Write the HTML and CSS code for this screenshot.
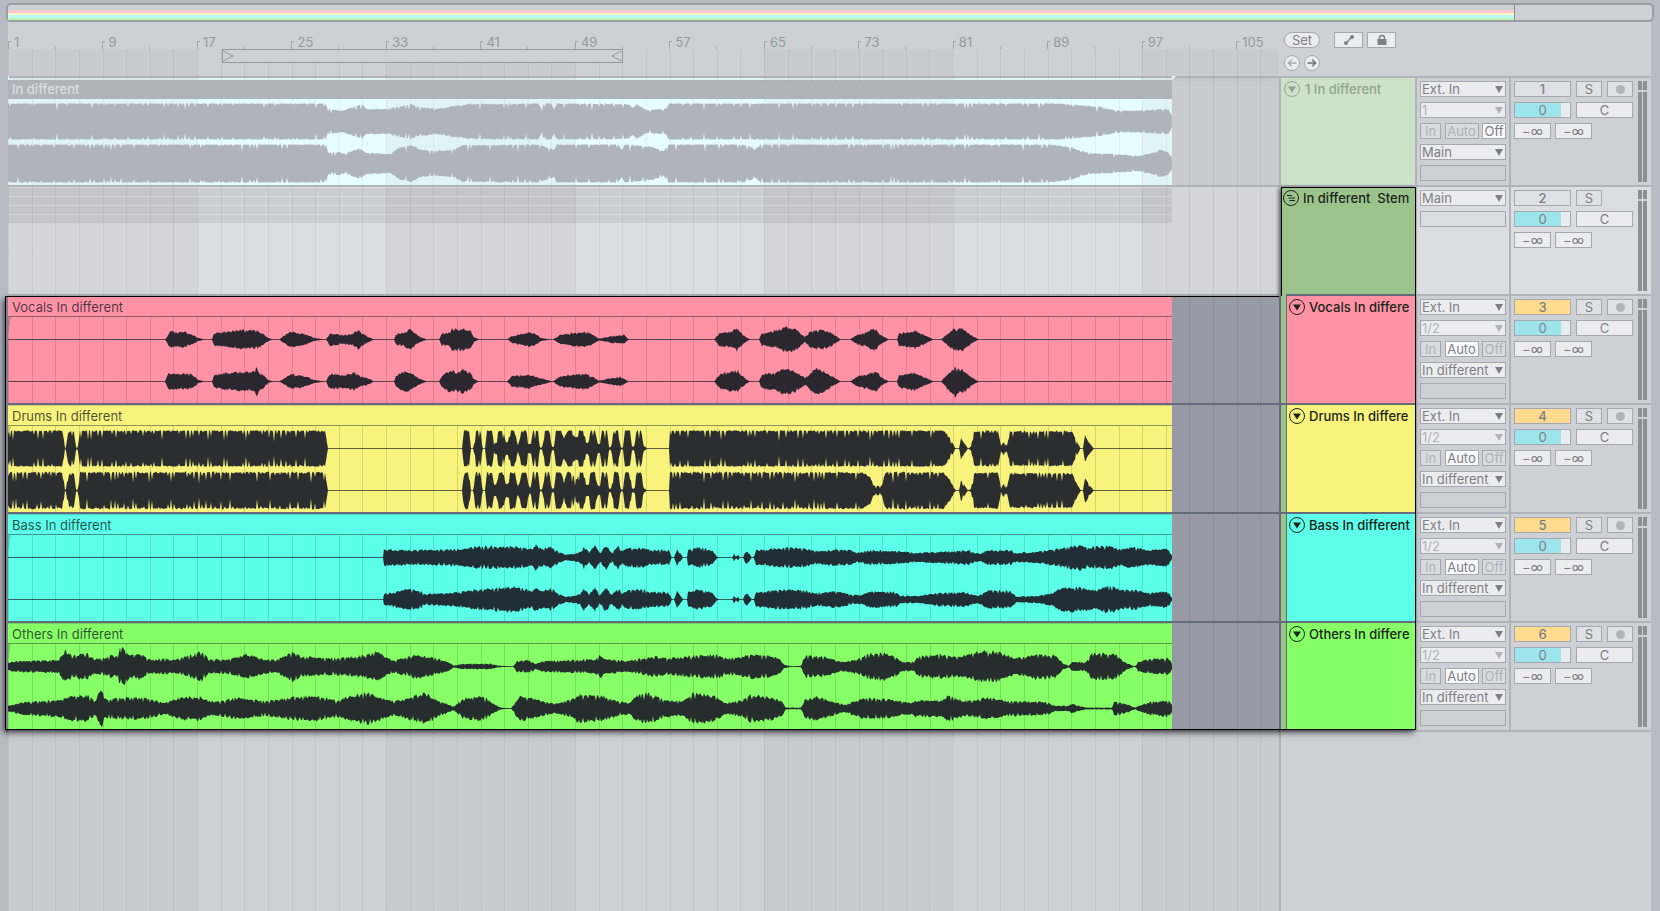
FILE: index.html
```html
<!DOCTYPE html>
<html lang="en">
<head>
  <meta charset="UTF-8" />
  <meta name="viewport" content="width=device-width, initial-scale=1.0"/>
  <title>In different - Arrangement</title>
  <link rel="stylesheet" href="styles.css">
</head>

<body>
  <!-- Overview -->
  <div class="overview"><div class="overview-content"></div></div>

  <div class="arranger">
    <!-- Ruler -->
    <div class="row ruler-row">
      <div class="ruler">
        <div class="ruler-numbers">
          <span>1</span><span>9</span><span>17</span><span>25</span><span>33</span><span>41</span><span>49</span>
          <span>57</span><span>65</span><span>73</span><span>81</span><span>89</span><span>97</span><span>105</span>
        </div>
        <div class="scrub grid-lines"></div>
        <div class="loop">
          <svg width="11" height="12" viewBox="0 0 11 12"><path d="M0.5 1 L10 6 L0.5 11" /></svg>
          <svg width="11" height="12" viewBox="0 0 11 12"><path d="M10.5 1 L1 6 L10.5 11" /></svg>
        </div>
        <i class="flag flag-start"></i>
        <i class="flag flag-end"></i>
      </div>
      <div class="ruler-tools">
        <div class="tool-line">
          <button class="pill">Set</button>
          <button class="tool tool-first" aria-label="Automation mode">
            <svg width="12" height="12" viewBox="0 0 12 12"><path d="M3 9.5 L9 2.5" stroke="#7d7f84" stroke-width="1.4"/><circle cx="3" cy="9" r="2" fill="#7d7f84"/><circle cx="9" cy="3" r="2" fill="#7d7f84"/></svg>
          </button>
          <button class="tool" aria-label="Lock envelopes">
            <svg width="12" height="12" viewBox="0 0 12 12"><path d="M3.5 6 V4 a2.5 2.5 0 0 1 5 0 V6" fill="none" stroke="#7d7f84" stroke-width="1.4"/><rect x="1.5" y="5" width="9" height="6" fill="#7d7f84"/></svg>
          </button>
        </div>
        <div class="tool-line">
          <button class="round off" aria-label="Previous locator">
            <svg width="10" height="10" viewBox="0 0 10 10"><path d="M9.5 5 H1.5 M4.8 1.8 L1.5 5 L4.8 8.2"/></svg>
          </button>
          <button class="round" aria-label="Next locator">
            <svg width="10" height="10" viewBox="0 0 10 10"><path d="M0.5 5 H8.5 M5.2 1.8 L8.5 5 L5.2 8.2"/></svg>
          </button>
        </div>
      </div>
    </div>

    <!-- Track 1 -->
    <div class="row track muted">
      <div class="lane grid-lines">
        <div class="clip">
          <div class="clip-title">In different</div>
          <svg class="wave" data-wave="mix" viewBox="0 0 1164 86" preserveAspectRatio="none"></svg>
        </div>
      </div>
      <div class="track-header">
        <button class="fold" aria-label="Fold track"><svg width="16" height="16" viewBox="0 0 16 16"><circle cx="8" cy="8" r="7.5"/><path d="M4 5.5 H12 L8 11.5 Z"/></svg></button>
        <span>1 In different</span>
      </div>
      <div class="io">
        <select aria-label="Input type"><option>Ext. In</option></select>
        <select class="dim" aria-label="Input channel"><option>1</option></select>
        <div class="monitor"><button>In</button><button>Auto</button><button class="on">Off</button></div>
        <select aria-label="Output type"><option>Main</option></select>
        <div class="blank"></div>
      </div>
      <div class="mixer">
        <div class="controls">
          <div class="line"><button class="num">1</button><button class="small">S</button><button class="small" aria-label="Arm"><i class="dot"></i></button></div>
          <div class="line"><input class="volume" type="text" value="0" aria-label="Volume"><input class="pan" type="text" value="C" aria-label="Pan"></div>
          <div class="line sends"><input type="text" value="−∞" aria-label="Send A"><input type="text" value="−∞" aria-label="Send B"></div>
        </div>
        <div class="meter"><i></i><i></i></div>
      </div>
    </div>

    <!-- Track 2, group -->
    <div class="row track group">
      <div class="lane grid-lines">
        <div class="mini-clips"><i></i><i></i><i></i><i></i></div>
      </div>
      <div class="track-header">
        <button class="fold" aria-label="Fold group"><svg width="16" height="16" viewBox="0 0 16 16"><circle cx="8" cy="8" r="7.5"/><path class="bars" d="M4 5.5 H9 M5.5 8 H12 M6.5 10.5 H12"/></svg></button>
        <span>In different  Stem</span>
      </div>
      <div class="io">
        <select aria-label="Output type"><option>Main</option></select>
        <div class="blank"></div>
      </div>
      <div class="mixer">
        <div class="controls">
          <div class="line"><button class="num">2</button><button class="small">S</button></div>
          <div class="line"><input class="volume" type="text" value="0" aria-label="Volume"><input class="pan" type="text" value="C" aria-label="Pan"></div>
          <div class="line sends"><input type="text" value="−∞" aria-label="Send A"><input type="text" value="−∞" aria-label="Send B"></div>
        </div>
        <div class="meter"><i></i><i></i></div>
      </div>
    </div>

    <!-- Stems -->
    <div class="stems">
      <div class="row track stem vocals">
        <div class="lane grid-lines">
          <div class="clip">
            <div class="clip-title">Vocals In different</div>
            <svg class="wave" data-wave="vocals" viewBox="0 0 1164 86" preserveAspectRatio="none"></svg>
          </div>
        </div>
        <div class="track-header">
          <button class="fold" aria-label="Fold track"><svg width="16" height="16" viewBox="0 0 16 16"><circle cx="8" cy="8" r="7.5"/><path d="M4 5.5 H12 L8 11.5 Z"/></svg></button>
          <span>Vocals In differe</span>
        </div>
        <div class="io">
          <select aria-label="Input type"><option>Ext. In</option></select>
          <select class="dim" aria-label="Input channel"><option>1/2</option></select>
          <div class="monitor"><button>In</button><button class="on">Auto</button><button>Off</button></div>
          <select aria-label="Output type"><option>In different</option></select>
          <div class="blank"></div>
        </div>
        <div class="mixer">
          <div class="controls">
            <div class="line"><button class="num">3</button><button class="small">S</button><button class="small" aria-label="Arm"><i class="dot"></i></button></div>
            <div class="line"><input class="volume" type="text" value="0" aria-label="Volume"><input class="pan" type="text" value="C" aria-label="Pan"></div>
            <div class="line sends"><input type="text" value="−∞" aria-label="Send A"><input type="text" value="−∞" aria-label="Send B"></div>
          </div>
          <div class="meter"><i></i><i></i></div>
        </div>
      </div>

      <div class="row track stem drums">
        <div class="lane grid-lines">
          <div class="clip">
            <div class="clip-title">Drums In different</div>
            <svg class="wave" data-wave="drums" viewBox="0 0 1164 86" preserveAspectRatio="none"></svg>
          </div>
        </div>
        <div class="track-header">
          <button class="fold" aria-label="Fold track"><svg width="16" height="16" viewBox="0 0 16 16"><circle cx="8" cy="8" r="7.5"/><path d="M4 5.5 H12 L8 11.5 Z"/></svg></button>
          <span>Drums In differe</span>
        </div>
        <div class="io">
          <select aria-label="Input type"><option>Ext. In</option></select>
          <select class="dim" aria-label="Input channel"><option>1/2</option></select>
          <div class="monitor"><button>In</button><button class="on">Auto</button><button>Off</button></div>
          <select aria-label="Output type"><option>In different</option></select>
          <div class="blank"></div>
        </div>
        <div class="mixer">
          <div class="controls">
            <div class="line"><button class="num">4</button><button class="small">S</button><button class="small" aria-label="Arm"><i class="dot"></i></button></div>
            <div class="line"><input class="volume" type="text" value="0" aria-label="Volume"><input class="pan" type="text" value="C" aria-label="Pan"></div>
            <div class="line sends"><input type="text" value="−∞" aria-label="Send A"><input type="text" value="−∞" aria-label="Send B"></div>
          </div>
          <div class="meter"><i></i><i></i></div>
        </div>
      </div>

      <div class="row track stem bass">
        <div class="lane grid-lines">
          <div class="clip">
            <div class="clip-title">Bass In different</div>
            <svg class="wave" data-wave="bass" viewBox="0 0 1164 86" preserveAspectRatio="none"></svg>
          </div>
        </div>
        <div class="track-header">
          <button class="fold" aria-label="Fold track"><svg width="16" height="16" viewBox="0 0 16 16"><circle cx="8" cy="8" r="7.5"/><path d="M4 5.5 H12 L8 11.5 Z"/></svg></button>
          <span>Bass In different</span>
        </div>
        <div class="io">
          <select aria-label="Input type"><option>Ext. In</option></select>
          <select class="dim" aria-label="Input channel"><option>1/2</option></select>
          <div class="monitor"><button>In</button><button class="on">Auto</button><button>Off</button></div>
          <select aria-label="Output type"><option>In different</option></select>
          <div class="blank"></div>
        </div>
        <div class="mixer">
          <div class="controls">
            <div class="line"><button class="num">5</button><button class="small">S</button><button class="small" aria-label="Arm"><i class="dot"></i></button></div>
            <div class="line"><input class="volume" type="text" value="0" aria-label="Volume"><input class="pan" type="text" value="C" aria-label="Pan"></div>
            <div class="line sends"><input type="text" value="−∞" aria-label="Send A"><input type="text" value="−∞" aria-label="Send B"></div>
          </div>
          <div class="meter"><i></i><i></i></div>
        </div>
      </div>

      <div class="row track stem others">
        <div class="lane grid-lines">
          <div class="clip">
            <div class="clip-title">Others In different</div>
            <svg class="wave" data-wave="others" viewBox="0 0 1164 86" preserveAspectRatio="none"></svg>
          </div>
        </div>
        <div class="track-header">
          <button class="fold" aria-label="Fold track"><svg width="16" height="16" viewBox="0 0 16 16"><circle cx="8" cy="8" r="7.5"/><path d="M4 5.5 H12 L8 11.5 Z"/></svg></button>
          <span>Others In differe</span>
        </div>
        <div class="io">
          <select aria-label="Input type"><option>Ext. In</option></select>
          <select class="dim" aria-label="Input channel"><option>1/2</option></select>
          <div class="monitor"><button>In</button><button class="on">Auto</button><button>Off</button></div>
          <select aria-label="Output type"><option>In different</option></select>
          <div class="blank"></div>
        </div>
        <div class="mixer">
          <div class="controls">
            <div class="line"><button class="num">6</button><button class="small">S</button><button class="small" aria-label="Arm"><i class="dot"></i></button></div>
            <div class="line"><input class="volume" type="text" value="0" aria-label="Volume"><input class="pan" type="text" value="C" aria-label="Pan"></div>
            <div class="line sends"><input type="text" value="−∞" aria-label="Send A"><input type="text" value="−∞" aria-label="Send B"></div>
          </div>
          <div class="meter"><i></i><i></i></div>
        </div>
      </div>
    </div>

    <!-- Drop area -->
    <div class="row drop-area">
      <div class="lane grid-lines"></div>
      <div class="drop-side"></div>
    </div>
  </div>

  <script src="waves.js"></script>
</body>
</html>
```

FILE: styles.css
```css
:root {
  --frame: #b9bac4;
  --surface: #cdd1d6;
  --line: #b0b3ba;
  --selected-line: #656b7a;
  --control-bg: #ececef;
  --control-border: #a6a8af;
  --text: #7d7f85;
  --text-dim: #b0b2b8;
  --band: rgba(182, 174, 182, 0.18);
  --grid: rgba(0, 0, 0, 0.06);
}

* {
  box-sizing: border-box;
}

body {
  margin: 0;
  padding: 3px 6px 0;
  min-height: 100vh;
  display: flex;
  flex-direction: column;
  background: var(--frame);
  color: var(--text);
  font-family: Inter, sans-serif;
  font-size: 13px;
  line-height: 16px;
}

button,
input,
select {
  margin: 0;
  padding: 0;
  height: 16px;
  min-width: 0;
  border: 1px solid var(--control-border);
  border-radius: 0;
  background: var(--control-bg);
  color: var(--text);
  font: inherit;
  line-height: 14px;
}

/* Overview */
.overview {
  height: 19px;
  padding: 5px 0 1px;
  border: 2px solid #9b9da3;
  border-radius: 5px;
  background: var(--surface);
}

.overview-content {
  position: relative;
  width: 91.6%;
  height: 10px;
  background: linear-gradient(#f9c8d0 0 3px, #fbfac4 3px 5px, #b9fbf3 5px 8px, #bdf9ae 8px);
}

.overview-content::after {
  content: "";
  position: absolute;
  right: -1px;
  top: -5px;
  bottom: -1px;
  width: 1px;
  background: #8f9197;
}

/* Arranger */
.arranger {
  flex: 1;
  margin: 0 3px 0 2px;
  display: flex;
  flex-direction: column;
  background: var(--surface);
}

.row {
  display: grid;
  grid-template-columns: 1fr 136px 94px 142px;
}

.grid-lines {
  background-image:
    repeating-linear-gradient(90deg, var(--grid) 0 1px, transparent 1px 1.859%),
    repeating-linear-gradient(90deg, var(--band) 0 14.87%, transparent 14.87% 29.74%);
}

/* Ruler */
.ruler-row {
  height: 56px;
  border-bottom: 2px solid var(--line);
}

.ruler {
  position: relative;
  display: flex;
  flex-direction: column;
}

.ruler-numbers {
  display: flex;
  height: 27px;
  padding-top: 12px;
  overflow: hidden;
  color: #96989d;
}

.ruler-numbers span {
  flex: 0 0 7.435%;
  height: 16px;
  padding-left: 6px;
  background:
    linear-gradient(#a3a5aa, #a3a5aa) 0 7px / 1px 8px no-repeat,
    linear-gradient(#a3a5aa, #a3a5aa) 0 7px / 3px 1px no-repeat,
    linear-gradient(#a3a5aa, #a3a5aa) 50% 13px / 1px 2px no-repeat;
}

.scrub {
  flex: 1;
}

.loop {
  position: absolute;
  left: 16.8%;
  top: 27px;
  width: 31.55%;
  height: 14px;
  display: flex;
  justify-content: space-between;
  border: 1px solid #96989d;
  background: var(--surface);
}

.loop path {
  fill: none;
  stroke: #96989d;
}

.flag {
  position: absolute;
  bottom: 1px;
  width: 4px;
  height: 4px;
  background: #e6fdff;
  clip-path: polygon(0 0, 100% 0, 0 100%);
}

.flag-start {
  left: 0;
  width: 1px;
  clip-path: none;
}

.flag-end {
  left: 91.58%;
}

.ruler-tools {
  grid-column: 2 / -1;
  display: flex;
  flex-direction: column;
  gap: 7px;
  padding: 10px 5px;
}

.tool-line {
  display: flex;
  gap: 4px;
}

.pill {
  width: 36px;
  border-radius: 8px;
}

.tool {
  width: 29px;
}

.tool-first {
  margin-left: 10px;
}

.tool,
.round {
  display: flex;
  align-items: center;
  justify-content: center;
}

.round {
  width: 16px;
  border-radius: 50%;
}

.round path {
  fill: none;
  stroke: #6f7176;
  stroke-width: 1.6;
}

.round.off path {
  stroke: #a9abb1;
}

/* Lanes and clips */
.track > div {
  min-height: 109px;
  border-bottom: 2px solid var(--line);
}

.clip {
  width: 91.58%;
}

.clip-title {
  height: 21px;
  padding: 2px 4px 0;
  border-bottom: 1px solid rgba(40, 50, 60, 0.5);
  border-top: 1px solid rgba(40, 50, 60, 0.2);
  color: rgba(20, 20, 30, 0.75);
}

.wave {
  display: block;
  width: 100%;
  height: 86px;
  background-image:
    linear-gradient(100deg, rgba(0, 0, 0, 0.12) 0 3px, transparent 3px),
    repeating-linear-gradient(90deg, rgba(0, 0, 0, 0.13) 0 1px, transparent 1px 2.03%);
}

.wave path {
  fill: #2b2d2f;
}

.vocals .wave path {
  fill: #2b2731;
}

.bass .wave path {
  fill: #222e36;
}

.others .wave path {
  fill: #252e2c;
}

.wave line {
  stroke: rgba(30, 30, 40, 0.7);
  stroke-width: 1;
}

.muted .clip {
  background: #e6fdff;
}

.muted .clip-title {
  border-top: 2px solid #e2f5f8;
  border-bottom: 0;
  height: 21px;
  padding-top: 1px;
  background: #b0b3ba;
  color: #dcdee2;
  font-weight: 500;
}

.muted .wave {
  background-image:
    repeating-linear-gradient(90deg, rgba(0, 0, 0, 0.05) 0 1px, transparent 1px 2.03%),
    repeating-linear-gradient(90deg, #e0f3f7 0 16.24%, transparent 16.24% 32.48%);
}

.muted .wave path {
  fill: #afb3bb;
}

.muted .wave line {
  stroke: none;
}

.mini-clips {
  width: 91.58%;
  padding-top: 1px;
  display: flex;
  flex-direction: column;
  gap: 1px;
}

.mini-clips i {
  height: 8px;
  background: rgba(0, 0, 0, 0.07);
}

/* Track headers */
.track-header {
  display: flex;
  align-items: flex-start;
  gap: 5px;
  padding: 3px 0 0 3px;
  border-left: 2px solid var(--line);
  overflow: hidden;
  white-space: pre;
  font-weight: 500;
}

.fold {
  flex: none;
  width: 16px;
  border: 0;
  background: none;
}

.fold svg {
  display: block;
}

.fold circle,
.fold .bars {
  fill: none;
  stroke: currentColor;
}

.fold path {
  fill: currentColor;
}

.muted .track-header,
.muted .fold {
  color: #93a390;
}

.muted .track-header {
  background: #cee2c8;
}

.group .track-header,
.stem .track-header,
.group .fold,
.stem .fold {
  color: #1b241b;
}

.group .lane,
.group .io,
.group .mixer {
  background-color: #dbdde1;
}

.group .track-header {
  position: relative;
  z-index: 2;
  gap: 4px;
  margin-left: 2px;
  padding-left: 2px;
  border: 0;
  overflow: visible;
  background: #9bc48d;
  box-shadow: inset 1px 1px 0 #000, 1px 0 0 #000, -2px 1px 4px rgba(0, 0, 0, 0.6);
}

.group .track-header::after {
  content: "";
  position: absolute;
  left: 5px;
  right: 0;
  bottom: 0;
  height: 2px;
  background: var(--selected-line);
}

/* Stems */
.stems {
  position: relative;
}

.stems::after {
  content: "";
  position: absolute;
  top: 0;
  left: -3px;
  right: 235px;
  bottom: 2px;
  border: 1px solid #000;
  box-shadow: -2px 3px 6px rgba(0, 0, 0, 0.6);
  pointer-events: none;
}

.stem .lane {
  background-color: #9096a1;
  border-bottom-color: var(--selected-line);
  box-shadow: -2px 0 0 #7d808c;
}

.stem .track-header {
  padding-left: 8px;
  gap: 4px;
  border-left-color: var(--selected-line);
  border-bottom-color: var(--selected-line);
}

.stem.vocals .track-header {
  position: relative;
  z-index: 3;
}

.stem.others > div {
  border-bottom-color: var(--line);
}

.vocals .clip {
  background: #ff93a5;
}

.drums .clip {
  background: #f8f37c;
}

.bass .clip {
  background: #5cffe8;
}

.others .clip {
  background: #87ff67;
}

.vocals .track-header {
  background: linear-gradient(90deg, #9bc48d 5px, #66706a 5px 6px, #ff93a5 6px);
}

.drums .track-header {
  background: linear-gradient(90deg, #9bc48d 5px, #66706a 5px 6px, #f8f37c 6px);
}

.bass .track-header {
  background: linear-gradient(90deg, #9bc48d 5px, #66706a 5px 6px, #5cffe8 6px);
}

.others .track-header {
  background: linear-gradient(90deg, #9bc48d 5px, #66706a 5px 6px, #87ff67 6px);
}

/* In / out section */
.io {
  display: flex;
  flex-direction: column;
  gap: 5px;
  padding: 3px 3px 4px;
  border-left: 2px solid var(--line);
}

.io select {
  appearance: none;
  width: 100%;
  padding: 0 0 0 1px;
  background: var(--control-bg) url("data:image/svg+xml,%3Csvg xmlns='http://www.w3.org/2000/svg' width='8' height='7'%3E%3Cpath d='M0 0h8L4 7z' fill='%237d7f85'/%3E%3C/svg%3E") right 2px center no-repeat;
}

.io .dim {
  color: var(--text-dim);
  background-image: url("data:image/svg+xml,%3Csvg xmlns='http://www.w3.org/2000/svg' width='8' height='7'%3E%3Cpath d='M0 0h8L4 7z' fill='%23b0b2b8'/%3E%3C/svg%3E");
}

.blank {
  height: 16px;
  border: 1px solid var(--control-border);
}

.monitor {
  display: grid;
  grid-template-columns: 21px 34px 24px;
  justify-content: space-between;
}

.monitor button {
  background: #d9dbdf;
  color: var(--text-dim);
}

.monitor .on {
  background: #f8f8fa;
  color: var(--text);
}

/* Mixer section */
.mixer {
  display: flex;
  justify-content: space-between;
  padding: 3px 4px 3px 3px;
  border-left: 2px solid var(--line);
}

.controls {
  display: flex;
  flex-direction: column;
  gap: 5px;
}

.line {
  display: flex;
  gap: 5px;
}

.line input {
  text-align: center;
}

.num,
.volume,
.pan {
  width: 57px;
}

.num {
  background: #dfe1e5;
  font-weight: 500;
}

.stem .num {
  background: #ffdb90;
}

.small {
  width: 26px;
  background: #dfe1e5;
}

.dot {
  display: block;
  width: 9px;
  height: 9px;
  margin: 0 auto;
  border-radius: 50%;
  background: var(--line);
}

.volume {
  background: linear-gradient(90deg, #9de5ed 84%, var(--control-bg) 84%);
}

.sends {
  gap: 4px;
}

.sends input {
  width: 37px;
}

.meter {
  display: flex;
  gap: 1px;
}

.meter i {
  width: 4px;
  background: linear-gradient(#8d8f94 9px, #cdd1d6 9px 11px, #8d8f94 11px);
}

/* Drop area */
.drop-area {
  flex: 1;
}

.drop-side {
  grid-column: 2 / -1;
  border-left: 2px solid var(--line);
}
```

FILE: waves.js
```js
// Envelopes are flat lists of x, amplitude pairs in clip pixels
const WIDTH = 1164;

const vocals = [
  157,0, 162,9, 169,8, 176,9, 185,5, 190,2, 197,0, 204,0, 206,7, 221,9, 235,11, 249,10, 254,7, 260,2, 265,0,
  271,0, 278,6, 283,9, 292,7, 299,5, 306,2, 316,0, 318,0, 322,7, 335,5, 344,6, 350,11, 355,7, 360,3, 366,0,
  386,0, 388,6, 397,8, 402,12, 406,8, 412,3, 419,0, 431,0, 434,7, 440,7, 444,12, 456,12, 463,9, 466,3, 471,0,
  499,0, 504,4, 521,8, 528,6, 533,2, 542,0, 545,0, 552,5, 569,8, 581,8, 591,1, 605,4, 616,5, 621,0,
  706,0, 712,8, 722,8, 729,13, 734,6, 742,0, 751,0, 754,7, 769,10, 779,14, 789,11, 797,3, 803,10, 816,11, 824,7, 833,0,
  842,0, 850,6, 859,8, 866,13, 873,5, 881,0, 889,0, 891,7, 907,10, 916,5, 926,0, 933,0, 940,7, 946,12, 956,12, 963,5, 971,0
];
const vocalsRight = [
  157,0, 160,9, 169,9, 180,9, 185,7, 190,2, 197,0, 204,0, 206,7, 221,10, 247,11, 249,17, 251,10, 256,7, 260,2, 265,0,
  271,0, 283,8, 292,7, 299,5, 306,2, 316,0, 318,0, 322,9, 335,7, 346,10, 352,6, 360,4, 366,0,
  386,0, 388,6, 397,12, 403,9, 412,3, 419,0, 431,0, 434,7, 443,13, 448,10, 454,14, 463,9, 466,3, 471,0,
  499,0, 504,6, 521,8, 528,5, 542,1, 545,0, 552,6, 577,9, 585,5, 591,1, 605,4, 613,5, 621,0,
  706,0, 712,8, 722,11, 730,12, 734,6, 742,0, 751,0, 754,8, 769,10, 775,15, 785,13, 797,4, 803,10, 808,15, 818,10, 833,0,
  842,0, 850,6, 859,8, 868,12, 873,5, 881,0, 889,0, 891,7, 907,10, 916,5, 926,0, 933,0, 940,9, 947,16, 956,12, 963,5, 971,0
];

const drumsStart = [0,15, 2,19, 54,19, 56,9, 57,0, 58,2, 60,15, 63,19, 66,17, 68,2, 69,0, 70,3, 72,19, 317,19, 320,0, 453,0];
const drumsEnd = [
  639,0, 661,0, 662,19, 935,19, 940,14, 948,0, 951,0, 953,11, 960,0, 963,2, 966,18, 990,19, 993,3, 996,7, 999,3, 1002,18,
  1064,18, 1070,5, 1073,0, 1075,0, 1077,14, 1081,6, 1086,0
];
// broken beat: one hit every 11.5px, with the level it falls back to
const hits = [];
[0, 0, 6, 7, 7, 5, 1, 2, 13, 12, 6, 5, 2, 1, 2, 2].forEach((low, i) => {
  const x = 454 + i * 11.5;
  hits.push(x, i ? hits[hits.length - 1] : 0, x + 2, 19, x + 7, 19, x + 9, low, x + 11, low);
});
const drums = drumsStart.concat(hits, drumsEnd);
const drumsRight = drumsStart.concat(hits, [
  639,0, 661,0, 662,19, 855,19, 862,14, 866,5, 874,5, 877,19
], drumsEnd.slice(6));

const bassMid = [543,12, 551,6, 558,3, 566,4, 572,6, 576,12, 581,6, 587,13, 592,5, 598,13, 604,5, 610,13, 614,7, 619,10, 633,11,
  643,8, 661,8, 664,0, 666,0, 669,9, 674,2, 675,0, 679,0, 680,8, 691,11, 704,8, 709,1, 712,0, 724,0, 726,4, 728,1, 730,3,
  732,0, 735,0, 738,8, 742,3, 744,0, 746,1, 748,8, 778,11, 797,10, 809,7, 829,9];
const bass = [375,0, 376,9, 400,8, 451,9, 470,12, 509,12, 524,9, 528,14, 535,9].concat(bassMid, [
  843,8, 849,5, 861,8, 888,7, 908,5, 948,7, 960,8, 967,5, 973,4, 979,8, 1003,8, 1007,5, 1027,6, 1047,9, 1072,14,
  1080,11, 1102,13, 1110,9, 1126,11, 1141,8, 1157,10, 1161,8, 1164,2
]);
const bassRight = [375,0, 376,6, 400,11, 412,10, 416,6, 451,8, 470,11, 509,14, 524,9, 528,13, 535,9].concat(bassMid, [
  845,5, 855,5, 861,9, 888,8, 893,4, 910,4, 930,7, 956,8, 970,4, 980,10, 1003,9, 1009,3, 1030,4, 1045,7, 1052,13,
  1072,13, 1088,10, 1100,15, 1115,10, 1126,11, 1141,7, 1157,9, 1161,7, 1164,2
]);

const others = [
  0,4, 7,6, 49,7, 53,11, 57,17, 65,12, 78,15, 86,8, 100,10, 103,13, 108,10, 112,20, 116,20, 122,12, 132,14, 143,7, 157,9, 164,7,
  183,12, 193,17, 201,8, 222,8, 237,14, 256,8, 268,7, 285,16, 294,11, 317,9, 336,10, 356,12, 369,17, 377,10, 386,7, 409,13,
  428,9, 440,5, 446,1, 455,3, 482,3, 490,1, 505,0, 509,6, 520,7, 528,3, 535,6, 566,7, 588,8, 592,13, 597,8, 619,6, 647,11, 659,9,
  687,12, 710,13, 720,9, 746,13, 762,12, 772,8, 776,2, 785,0, 793,1, 797,12, 817,11, 833,5, 850,8, 861,14, 874,15, 888,11, 894,5,
  906,5, 910,11, 928,13, 952,11, 971,16, 987,17, 1007,9, 1031,14, 1047,12, 1056,3, 1061,1, 1064,5, 1078,5, 1084,14,
  1108,14, 1118,4, 1127,0, 1130,5, 1141,8, 1161,9, 1164,3
];
const othersRight = [
  0,3, 15,7, 49,9, 65,14, 80,14, 88,8, 91,20, 94,20, 97,10, 118,12, 137,12, 157,6, 172,12, 191,13, 206,7, 229,12, 256,8, 283,12,
  308,14, 329,9, 344,14, 361,17, 375,11, 386,8, 417,17, 428,10, 446,2, 455,11, 474,14, 486,5, 493,1, 503,0, 512,14,
  528,10, 547,5, 566,11, 570,16, 589,14, 596,13, 612,7, 623,7, 627,13, 639,17, 659,9, 675,8, 685,17, 706,14, 718,6,
  734,9, 742,15, 766,12, 774,8, 778,1, 793,1, 797,10, 809,13, 837,4, 853,11, 874,11, 904,6, 908,9, 934,9, 940,14,
  956,8, 981,12, 999,8, 1019,8, 1039,7, 1047,3, 1060,3, 1064,5, 1078,1, 1104,1, 1106,8, 1118,5, 1127,1, 1141,7, 1161,9, 1164,4
];

const mix = [
  0,19, 317,19, 320,13, 335,11, 345,15, 354,18, 358,13, 380,13, 392,16, 403,18, 411,15, 430,13, 445,16, 460,18, 530,19, 533,14,
  537,19, 543,19, 546,13, 549,19, 620,18, 625,14, 629,18, 638,12, 658,13, 661,19, 1050,19, 1070,17, 1093,15, 1105,12, 1120,11,
  1140,12, 1160,13, 1164,6
];
const mixRight = [
  0,20, 318,20, 320,11, 332,12, 338,10, 346,14, 352,16, 358,11, 383,10, 390,16, 403,19, 413,14, 425,13, 445,14, 455,19, 530,20, 546,14,
  549,20, 610,20, 614,14, 617,20, 645,17, 656,13, 661,20, 735,20, 748,15, 752,20, 1040,20, 1062,17, 1080,11, 1100,10, 1130,8,
  1145,11, 1152,14, 1160,12, 1164,6
];

// rough: ripple on every pixel, dip/power: depth and rarity of the narrow notches, cap: loudest value drawn
const waves = {
  mix: { left: mix, right: mixRight, rough: 0.08, dip: 0.4, power: 4, cap: 18 },
  vocals: { left: vocals, right: vocalsRight, rough: 0.25, dip: 0.2, power: 1, cap: 20 },
  drums: { left: drums, right: drumsRight, rough: 0.1, dip: 0.6, power: 2, cap: 18 },
  bass: { left: bass, right: bassRight, rough: 0.2, dip: 0.35, power: 1, cap: 20 },
  others: { left: others, right: othersRight, rough: 0.22, dip: 0.4, power: 1, cap: 19 }
};

function noise(n) {
  const v = Math.sin(n * 127.1 + 11.7) * 43758.5453;
  return v - Math.floor(v);
}

function envelope(points, x) {
  if (x <= points[0]) return points[1];
  for (let i = 2; i < points.length; i += 2) {
    if (x <= points[i]) {
      const t = (x - points[i - 2]) / (points[i] - points[i - 2] || 1);
      return points[i - 1] + (points[i + 1] - points[i - 1]) * t;
    }
  }
  return points[points.length - 1];
}

// notches sit three to five pixels apart
function notches(seed, opts) {
  const list = new Array(WIDTH + 1).fill(0);
  let n = seed;
  for (let x = 2; x <= WIDTH; x += 3 + Math.floor(noise(n) * 3)) {
    n++;
    list[x] = opts.dip * Math.pow(noise(n + 900), opts.power);
  }
  return list;
}

function wavePath(points, center, seed, opts) {
  const top = [];
  const bottom = [];
  const dips = notches(seed, opts);
  for (let x = 0; x <= WIDTH; x++) {
    const amp = envelope(points, x) * (1 - dips[x]);
    const up = Math.min(opts.cap, amp * (1 - opts.rough * noise(x + seed)));
    const down = Math.min(opts.cap, amp * (1 - opts.rough * noise(x * 3 + seed + 500)));
    top.push(x + ' ' + (center - up).toFixed(1));
    bottom.unshift(x + ' ' + (center + down).toFixed(1));
  }
  return '<line x1="0" x2="' + WIDTH + '" y1="' + center + '" y2="' + center + '"/>' +
    '<path d="M' + top.concat(bottom).join('L') + 'Z"/>';
}

document.querySelectorAll('.wave').forEach((svg, i) => {
  const wave = waves[svg.dataset.wave];
  svg.innerHTML = wavePath(wave.left, 22.5, i * 40, wave) +
    wavePath(wave.right, 64.5, i * 40 + 17, Object.assign({}, wave, { cap: wave.cap + 1 }));
});
```
